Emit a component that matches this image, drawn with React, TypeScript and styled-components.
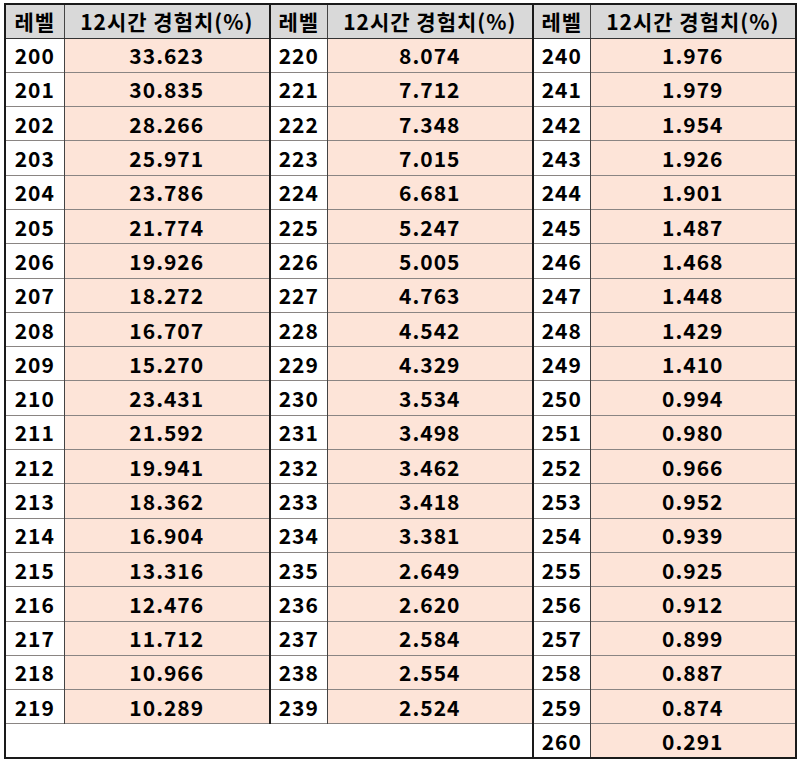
import React from "react";
import styled, { createGlobalStyle } from "styled-components";

const GlobalStyle = createGlobalStyle`
  body {
    margin: 0;
    background: #ffffff;
    font-family: "Noto Sans CJK KR", "Noto Sans", sans-serif;
  }
`;

const groups: [number, string][][] = [
  [
    [200, "33.623"], [201, "30.835"], [202, "28.266"], [203, "25.971"], [204, "23.786"],
    [205, "21.774"], [206, "19.926"], [207, "18.272"], [208, "16.707"], [209, "15.270"],
    [210, "23.431"], [211, "21.592"], [212, "19.941"], [213, "18.362"], [214, "16.904"],
    [215, "13.316"], [216, "12.476"], [217, "11.712"], [218, "10.966"], [219, "10.289"],
  ],
  [
    [220, "8.074"], [221, "7.712"], [222, "7.348"], [223, "7.015"], [224, "6.681"],
    [225, "5.247"], [226, "5.005"], [227, "4.763"], [228, "4.542"], [229, "4.329"],
    [230, "3.534"], [231, "3.498"], [232, "3.462"], [233, "3.418"], [234, "3.381"],
    [235, "2.649"], [236, "2.620"], [237, "2.584"], [238, "2.554"], [239, "2.524"],
  ],
  [
    [240, "1.976"], [241, "1.979"], [242, "1.954"], [243, "1.926"], [244, "1.901"],
    [245, "1.487"], [246, "1.468"], [247, "1.448"], [248, "1.429"], [249, "1.410"],
    [250, "0.994"], [251, "0.980"], [252, "0.966"], [253, "0.952"], [254, "0.939"],
    [255, "0.925"], [256, "0.912"], [257, "0.899"], [258, "0.887"], [259, "0.874"],
  ],
];

const App = () => {
  const rows = groups[0].map((_, i) => i);
  return (
    <>
      <GlobalStyle />
      <Sheet>
        <colgroup>
          <LevelCol $wide />
          <ValueCol />
          <LevelCol />
          <ValueCol />
          <LevelCol />
          <ValueCol />
        </colgroup>
        <thead>
          <HeadRow>
            {groups.map((_, g) => (
              <React.Fragment key={g}>
                <HeadCell $first={g > 0}>레벨</HeadCell>
                <HeadCell>12시간 경험치(%)</HeadCell>
              </React.Fragment>
            ))}
          </HeadRow>
        </thead>
        <tbody>
          {rows.map((i) => (
            <Row key={i}>
              {groups.map((group, g) => (
                <React.Fragment key={g}>
                  <LevelCell $first={g > 0}>{group[i][0]}</LevelCell>
                  <ValueCell>{group[i][1]}</ValueCell>
                </React.Fragment>
              ))}
            </Row>
          ))}
          <Row>
            <BlankCell colSpan={4} />
            <LevelCell $first>260</LevelCell>
            <ValueCell>0.291</ValueCell>
          </Row>
        </tbody>
      </Sheet>
    </>
  );
};

export default App;

const Sheet = styled.table`
  margin: 3px 0 0 4px;
  width: 791px;
  table-layout: fixed;
  border-collapse: collapse;
  border: 2px solid #1a1a1a;
  color: #000;
  font-size: 21px;
  font-weight: 700;
  letter-spacing: 1px;
`;

const LevelCol = styled.col<{ $wide?: boolean }>`
  width: ${(p) => (p.$wide ? "59px" : "57px")};
`;

const ValueCol = styled.col`
  width: 206px;
`;

const HeadRow = styled.tr`
  height: 34px;
`;

const Row = styled.tr`
  height: 34.3px;
`;

const HeadCell = styled.th<{ $first?: boolean }>`
  padding: 0;
  background: #d9d9d9;
  font-weight: 700;
  text-align: center;
  white-space: nowrap;
  border-bottom: 1px solid #333;
  border-left: ${(p) => (p.$first ? "2px solid #1a1a1a" : "1px solid #444")};
`;

const LevelCell = styled.td<{ $first?: boolean }>`
  padding: 0;
  background: #ffffff;
  text-align: center;
  border-top: 1px solid #8a8583;
  border-left: ${(p) => (p.$first ? "2px solid #1a1a1a" : "none")};
`;

const ValueCell = styled.td`
  padding: 0;
  background: #fde4d8;
  text-align: center;
  border-top: 1px solid #8a8583;
  border-left: 1px solid #444;
`;

const BlankCell = styled.td`
  padding: 0;
  background: #ffffff;
  border-top: 1px solid #8a8583;
`;
